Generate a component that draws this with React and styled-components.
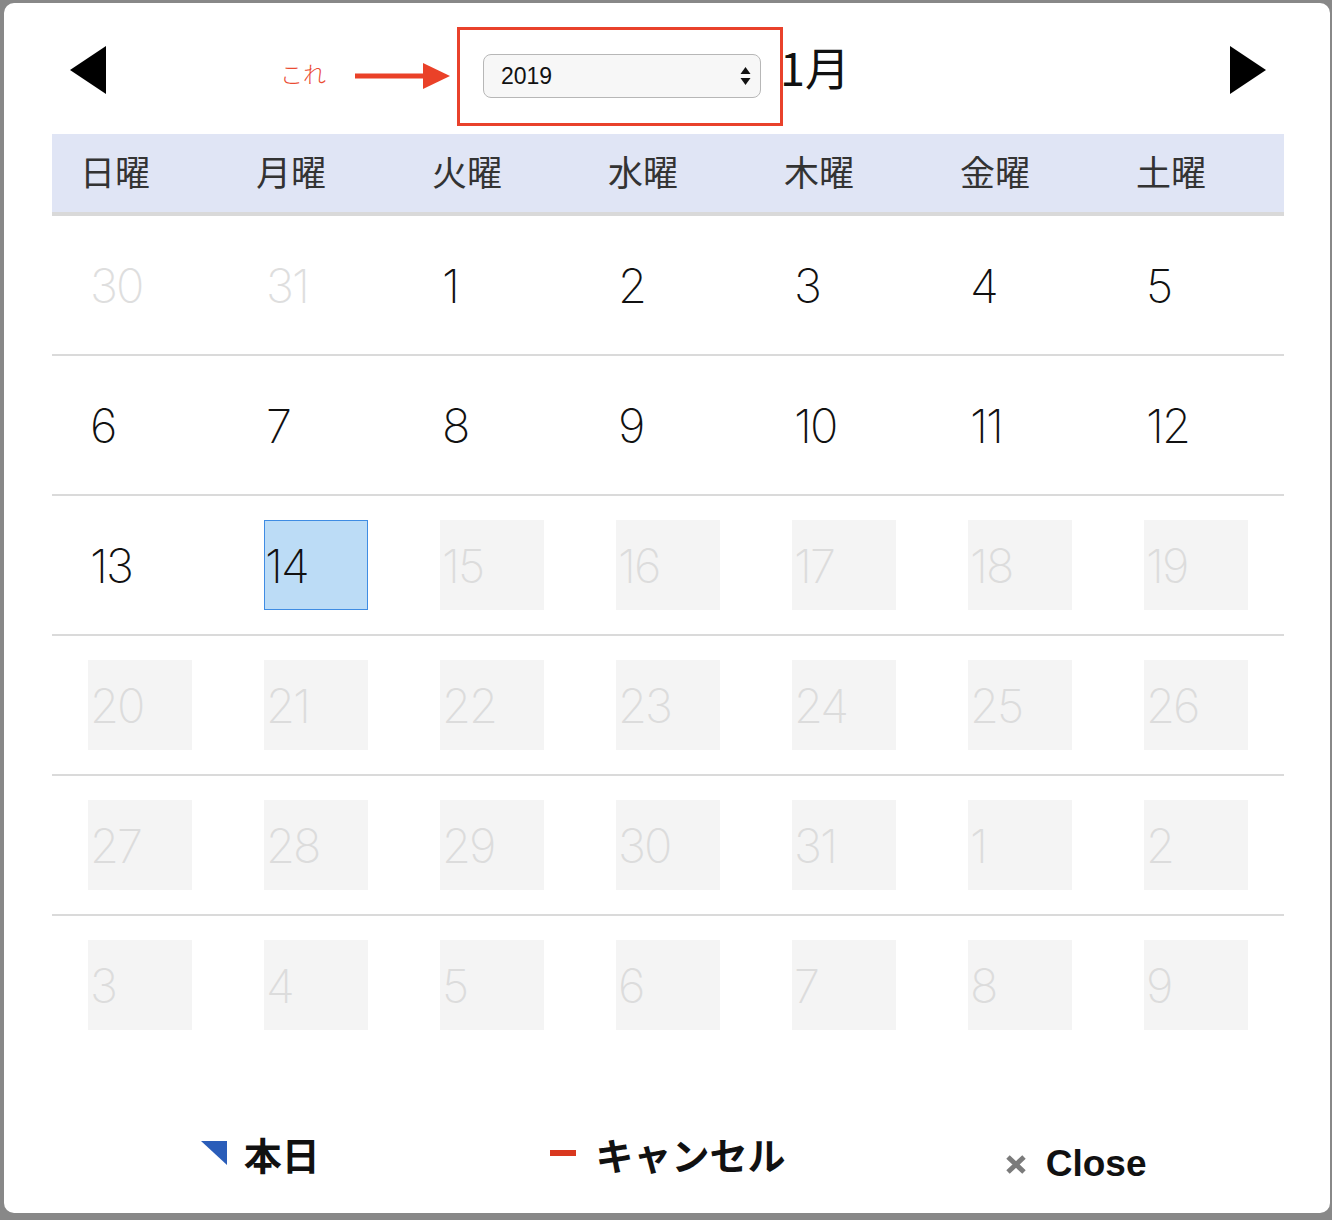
import React from "react";
import styled, { createGlobalStyle } from "styled-components";

const GlobalStyle = createGlobalStyle`
  html, body {
    margin: 0;
    background: #888888;
  }
  body {
    font-family: "Noto Sans CJK JP", "Liberation Sans", sans-serif;
  }
`;

const WEEKDAYS = ["日曜", "月曜", "火曜", "水曜", "木曜", "金曜", "土曜"];

// p = previous month, c = current, s = selected, f = future (disabled)
const WEEKS = [
  [[30, "p"], [31, "p"], [1, "c"], [2, "c"], [3, "c"], [4, "c"], [5, "c"]],
  [[6, "c"], [7, "c"], [8, "c"], [9, "c"], [10, "c"], [11, "c"], [12, "c"]],
  [[13, "c"], [14, "s"], [15, "f"], [16, "f"], [17, "f"], [18, "f"], [19, "f"]],
  [[20, "f"], [21, "f"], [22, "f"], [23, "f"], [24, "f"], [25, "f"], [26, "f"]],
  [[27, "f"], [28, "f"], [29, "f"], [30, "f"], [31, "f"], [1, "f"], [2, "f"]],
  [[3, "f"], [4, "f"], [5, "f"], [6, "f"], [7, "f"], [8, "f"], [9, "f"]],
];

const Panel = styled.div`
  margin: 3px 2px 0 4px;
  height: 1210px;
  background: #ffffff;
  border-radius: 10px;
  overflow: hidden;
`;

const Header = styled.div`
  display: flex;
  align-items: flex-start;
  height: 131px;
  padding: 0 64px 0 66px;
  box-sizing: border-box;
`;

const NavButton = styled.div`
  margin-top: 43px;
  width: 36px;
  height: 48px;
  cursor: pointer;
  svg {
    display: block;
  }
`;

const Note = styled.span`
  margin: 59px 0 0 174px;
  font-size: 23px;
  line-height: 23px;
  font-weight: 300;
  color: #ea4b33;
  width: 46px;
  white-space: nowrap;
`;

const Pointer = styled.svg`
  margin: 60px 0 0 29px;
  display: block;
`;

const Highlight = styled.div`
  margin: 24px 0 0 7px;
  width: 326px;
  height: 99px;
  box-sizing: border-box;
  border: 3px solid #e9412b;
  padding: 24px 19px 25px 23px;
`;

const YearSelect = styled.div`
  width: 278px;
  height: 44px;
  box-sizing: border-box;
  border: 1.5px solid #b7b7b7;
  border-radius: 8px;
  background: #f7f7f7;
  display: flex;
  align-items: center;
  justify-content: space-between;
  padding: 0 9px 0 17px;
  font-family: "Liberation Sans", Arial, sans-serif;
  font-size: 23px;
  color: #111;
`;

const MonthTitle = styled.div`
  margin: 41px 0 0 -3px;
  font-size: 45px;
  line-height: 45px;
  color: #111;
  white-space: nowrap;
`;

const Spacer = styled.div`
  flex: 1;
`;

const Body = styled.div`
  padding: 0 46px 0 48px;
`;

const WeekdayBand = styled.div`
  display: grid;
  grid-template-columns: repeat(7, 1fr);
  height: 82px;
  box-sizing: border-box;
  background: #e0e5f5;
  border-bottom: 4px solid #d9d9d9;
`;

const Weekday = styled.div`
  display: flex;
  align-items: center;
  padding: 0 0 5px 28px;
  font-size: 35px;
  color: #333333;
`;

const Weeks = styled.div`
  display: flex;
  flex-direction: column;
`;

const Week = styled.div`
  display: grid;
  grid-template-columns: repeat(7, 1fr);
  height: 140px;
  box-sizing: border-box;
  border-bottom: 2px solid #dadada;
  &:last-child {
    border-bottom: none;
    height: 138px;
  }
`;

const dayColors = {
  p: { bg: "transparent", fg: "#dedede", border: "transparent" },
  c: { bg: "transparent", fg: "#111111", border: "transparent" },
  s: { bg: "#bcdcf6", fg: "#111111", border: "#3f8ce3" },
  f: { bg: "#f4f4f4", fg: "#dcdcdc", border: "transparent" },
};

const Day = styled.div`
  justify-self: center;
  align-self: center;
  width: 104px;
  height: 90px;
  box-sizing: border-box;
  display: flex;
  align-items: center;
  padding-left: ${(p) => (p.$kind === "s" ? "0" : "1px")};
  font-family: Inter, Roboto, sans-serif;
  font-weight: 200;
  font-size: 47px;
  letter-spacing: -2px;
  background: ${(p) => dayColors[p.$kind].bg};
  color: ${(p) => dayColors[p.$kind].fg};
  border: 1.5px solid ${(p) => dayColors[p.$kind].border};
  cursor: ${(p) => (p.$kind === "f" ? "default" : "pointer")};
`;

const Footer = styled.div`
  display: grid;
  grid-template-columns: repeat(3, 1fr);
  padding-top: 69px;
`;

const Action = styled.div`
  display: flex;
  justify-content: center;
  align-items: center;
  gap: ${(p) => p.$gap}px;
  height: 60px;
  padding-top: ${(p) => p.$shift || 0}px;
  margin-left: ${(p) => p.$nudge || 0}px;
  box-sizing: border-box;
  font-size: 38px;
  font-weight: 700;
  color: #111;
  cursor: pointer;
  svg {
    display: block;
    flex-shrink: 0;
  }
`;

const CloseLabel = styled.span`
  font-family: "Liberation Sans", Arial, sans-serif;
  font-size: 37px;
  font-weight: 700;
`;

const App = () => {
  return (
    <>
      <GlobalStyle />
      <Panel>
        <Header>
          <NavButton>
            <svg width="36" height="48" viewBox="0 0 36 48">
              <polygon points="36,0 0,24 36,48" fill="#000" />
            </svg>
          </NavButton>
          <Note>これ</Note>
          <Pointer width="95" height="26" viewBox="0 0 95 26">
            <rect x="0" y="10.5" width="72" height="5" fill="#ea4128" />
            <polygon points="68,0 95,13 68,26" fill="#ea4128" />
          </Pointer>
          <Highlight>
            <YearSelect>
              <span>2019</span>
              <svg width="11" height="20" viewBox="0 0 11 20">
                <polygon points="5.5,1 10.5,8 0.5,8" fill="#111" />
                <polygon points="0.5,12 10.5,12 5.5,19" fill="#111" />
              </svg>
            </YearSelect>
          </Highlight>
          <MonthTitle>1月</MonthTitle>
          <Spacer />
          <NavButton>
            <svg width="36" height="48" viewBox="0 0 36 48">
              <polygon points="0,0 36,24 0,48" fill="#000" />
            </svg>
          </NavButton>
        </Header>
        <Body>
          <WeekdayBand>
            {WEEKDAYS.map((w) => (
              <Weekday key={w}>{w}</Weekday>
            ))}
          </WeekdayBand>
          <Weeks>
            {WEEKS.map((week, i) => (
              <Week key={i}>
                {week.map(([n, kind], j) => (
                  <Day key={j} $kind={kind}>
                    {n}
                  </Day>
                ))}
              </Week>
            ))}
          </Weeks>
          <Footer>
            <Action $gap={17} $nudge={6}>
              <svg width="26" height="24" viewBox="0 0 26 24">
                <polygon points="0,0 26,0 26,24" fill="#2a5db9" />
              </svg>
              <span>本日</span>
            </Action>
            <Action $gap={19}>
              <svg width="26" height="6" viewBox="0 0 26 6">
                <rect width="26" height="6" fill="#d9381f" />
              </svg>
              <span>キャンセル</span>
            </Action>
            <Action $gap={19} $shift={22} $nudge={-6}>
              <svg width="22" height="21" viewBox="0 0 22 21">
                <path d="M3 3 L19 18 M19 3 L3 18" stroke="#7b7b7b" strokeWidth="5" />
              </svg>
              <CloseLabel>Close</CloseLabel>
            </Action>
          </Footer>
        </Body>
      </Panel>
    </>
  );
};

export default App;
